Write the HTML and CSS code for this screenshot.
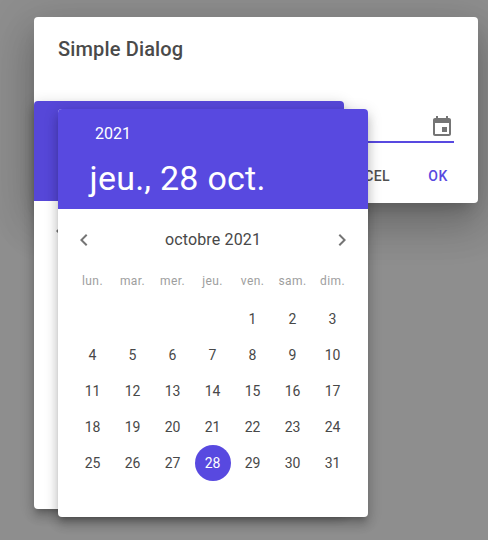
FILE: index.html
```html
<!DOCTYPE html>
<html lang="fr">
<head>
<meta charset="utf-8">
<title>Simple Dialog</title>
<link rel="stylesheet" href="styles.css">
</head>
<body>
<section class="dialog">
  <h2 class="dialog-title">Simple Dialog</h2>
  <div class="field">
    <svg class="cal-icon" viewBox="0 0 24 24" width="24" height="24"><path d="M17 12h-5v5h5v-5zM16 1v2H8V1H6v2H5c-1.11 0-1.99.9-1.99 2L3 19c0 1.1.89 2 2 2h14c1.1 0 2-.9 2-2V5c0-1.1-.9-2-2-2h-1V1h-2zm3 18H5V8h14v11z"/></svg>
  </div>
  <div class="actions">
    <span class="btn">CANCEL</span>
    <span class="btn btn-primary">OK</span>
  </div>
</section>

<section class="picker picker-back">
  <div class="picker-head"></div>
  <svg class="chev chev-back" viewBox="0 0 24 24" width="24" height="24"><path d="M15.41 7.41 14 6l-6 6 6 6 1.41-1.41L10.83 12z"/></svg>
</section>

<section class="picker picker-front">
  <header class="picker-head">
    <div class="year">2021</div>
    <div class="date">jeu., 28 oct.</div>
  </header>
  <div class="month-bar">
    <svg class="chev" viewBox="0 0 24 24" width="24" height="24"><path d="M15.41 7.41 14 6l-6 6 6 6 1.41-1.41L10.83 12z"/></svg>
    <span class="month">octobre 2021</span>
    <svg class="chev" viewBox="0 0 24 24" width="24" height="24"><path d="M10 6 8.59 7.41 13.17 12l-4.58 4.59L10 18l6-6z"/></svg>
  </div>
  <div class="weekdays">
    <span>lun.</span><span>mar.</span><span>mer.</span><span>jeu.</span><span>ven.</span><span>sam.</span><span>dim.</span>
  </div>
  <div class="days">
    <span></span><span></span><span></span><span></span><span>1</span><span>2</span><span>3</span>
    <span>4</span><span>5</span><span>6</span><span>7</span><span>8</span><span>9</span><span>10</span>
    <span>11</span><span>12</span><span>13</span><span>14</span><span>15</span><span>16</span><span>17</span>
    <span>18</span><span>19</span><span>20</span><span>21</span><span>22</span><span>23</span><span>24</span>
    <span>25</span><span>26</span><span>27</span><span class="selected"><b>28</b></span><span>29</span><span>30</span><span>31</span>
  </div>
</section>
</body>
</html>
```
FILE: styles.css
```css
html, body {
  margin: 0;
  height: 100%;
  overflow: hidden;
}
body {
  background: #8e8e8e;
  font-family: Roboto, "Liberation Sans", sans-serif;
  color: #484848;
}
.dialog {
  position: absolute;
  left: 34px;
  top: 17px;
  width: 444px;
  height: 186px;
  background: #fff;
  border-radius: 4px;
  box-shadow: 0 11px 15px -7px rgba(0,0,0,.2), 0 24px 38px 3px rgba(0,0,0,.14), 0 9px 46px 8px rgba(0,0,0,.12);
  box-sizing: border-box;
  padding: 16px 24px 8px;
  display: flex;
  flex-direction: column;
}
.dialog-title {
  margin: 0;
  font-size: 20px;
  line-height: 32px;
  font-weight: 500;
  letter-spacing: .15px;
  color: #4a4a4a;
}
.field {
  flex: none;
  height: 43px;
  margin-top: 33px;
  border-bottom: 2px solid #5849e0;
  display: flex;
  justify-content: flex-end;
  align-items: flex-start;
}
.cal-icon {
  fill: #757575;
  margin-top: 17px;
}
.actions {
  flex: none;
  display: flex;
  justify-content: flex-end;
  margin: 15px -16px 0 0;
  gap: 8px;
}
.btn {
  font-size: 14px;
  font-weight: 500;
  line-height: 36px;
  padding: 0 8px;
  min-width: 64px;
  text-align: center;
  letter-spacing: .4px;
  color: #505050;
  box-sizing: border-box;
}
.btn-primary {
  color: #5849e0;
}
.picker {
  position: absolute;
  width: 310px;
  height: 408px;
  background: #fff;
  border-radius: 4px;
  overflow: hidden;
  box-shadow: 0 5px 5px -3px rgba(0,0,0,.2), 0 8px 10px 1px rgba(0,0,0,.14), 0 3px 14px 2px rgba(0,0,0,.12);
}
.picker-back {
  left: 34px;
  top: 101px;
}
.chev-back {
  position: absolute;
  left: 14px;
  top: 118px;
}
.picker-front {
  left: 58px;
  top: 109px;
}
.picker-head {
  height: 100px;
  background: #5849e0;
  color: #fff;
  box-sizing: border-box;
  padding: 16px 0 0 31px;
}
.picker-back .picker-head {
  background: #5647d8;
}
.year {
  font-size: 16px;
  line-height: 18px;
  padding-left: 6px;
}
.date {
  font-size: 34px;
  line-height: 42px;
  margin-top: 14px;
  margin-left: .5px;
  letter-spacing: .25px;
  white-space: nowrap;
}
.month-bar {
  display: flex;
  align-items: center;
  justify-content: space-between;
  height: 24px;
  margin: 19px 14px 0;
}
.chev {
  fill: #757575;
  flex: none;
}
.month {
  font-size: 16px;
  line-height: 24px;
  letter-spacing: .15px;
}
.weekdays, .days {
  display: grid;
  grid-template-columns: repeat(7, 40px);
  margin-left: 15px;
  text-align: center;
}
.weekdays {
  margin-top: 23px;
  font-size: 12px;
  line-height: 12px;
  letter-spacing: .4px;
  color: #9e9e9e;
}
.weekdays span {
  padding-right: 1px;
}
.days {
  margin-top: 14px;
  grid-auto-rows: 36px;
  font-size: 14px;
}
.days span {
  display: flex;
  align-items: center;
  justify-content: center;
  padding-right: 1px;
}
.days .selected {
  padding-right: 0;
}
.selected b {
  box-sizing: border-box;
  width: 36px;
  height: 36px;
  padding-right: 1px;
  border-radius: 50%;
  background: #5849e0;
  color: #fff;
  font-weight: 400;
  display: flex;
  align-items: center;
  justify-content: center;
}
```
